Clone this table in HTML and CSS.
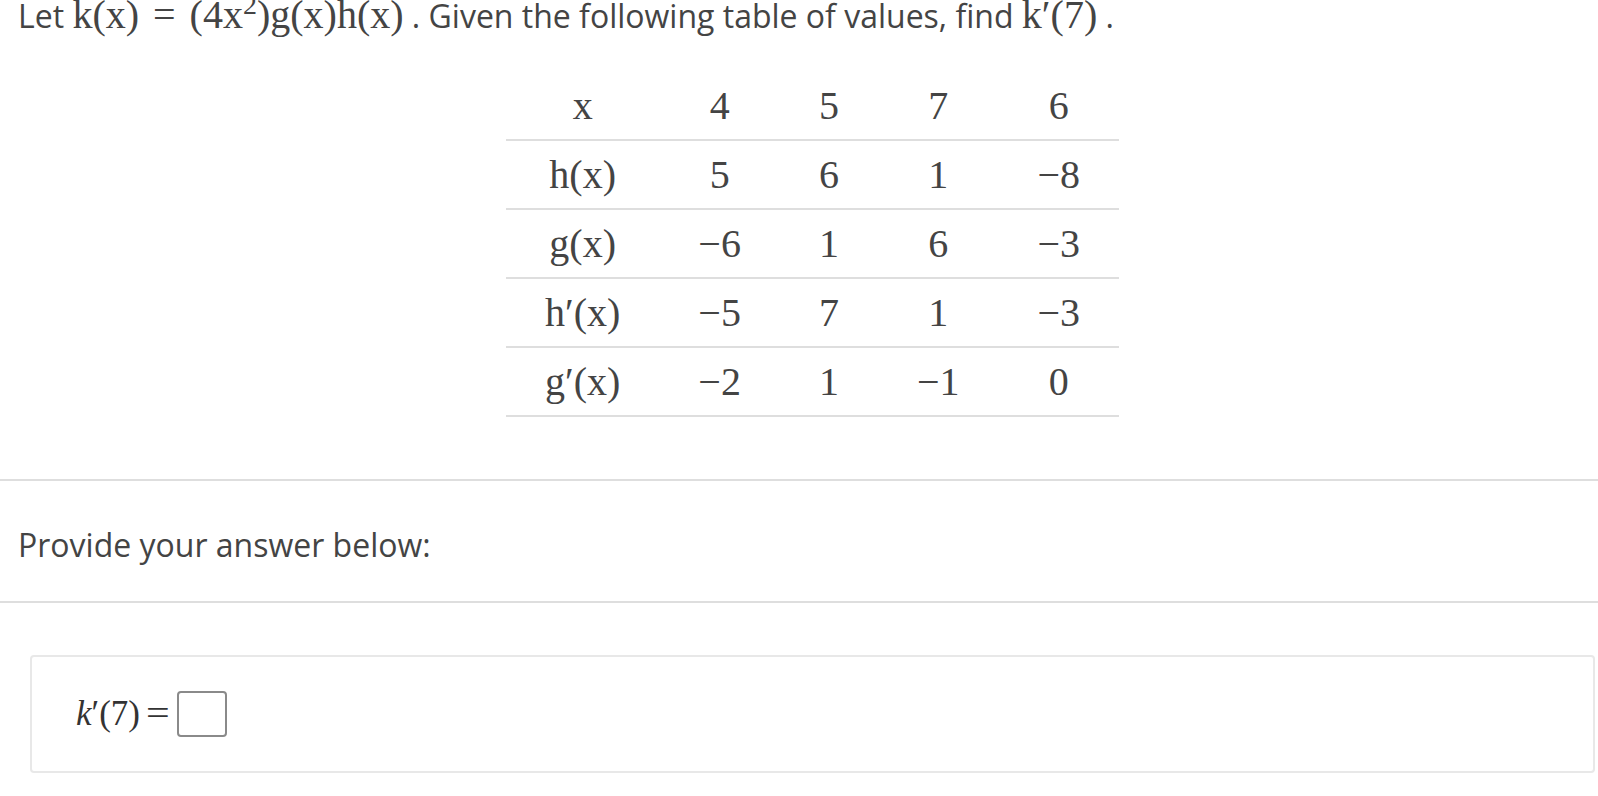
FILE: index.html
```html
<!DOCTYPE html>
<html lang="en">
<head>
<meta charset="utf-8">
<title>Question</title>
<link rel="stylesheet" href="styles.css">
</head>
<body>
<div class="page">
  <section class="question">
    <p class="prompt">Let <span class="m">k(x)<span class="rel">=</span>(4x<sup>2</sup>)g(x)h(x)</span> . Given the following table of values, find <span class="m">k′(7)</span> .</p>
    <table class="values">
      <tr><td>x</td><td>4</td><td>5</td><td>7</td><td>6</td></tr>
      <tr><td>h(x)</td><td>5</td><td>6</td><td>1</td><td>−8</td></tr>
      <tr><td>g(x)</td><td>−6</td><td>1</td><td>6</td><td>−3</td></tr>
      <tr><td>h′(x)</td><td>−5</td><td>7</td><td>1</td><td>−3</td></tr>
      <tr><td>g′(x)</td><td>−2</td><td>1</td><td>−1</td><td>0</td></tr>
    </table>
  </section>
  <section class="answer-label">
    <p>Provide your answer below:</p>
  </section>
  <section class="answer">
    <div class="answer-box">
      <span class="tex"><i>k</i>′(7)<span class="eq">=</span></span><span class="blank"></span>
    </div>
  </section>
</div>
</body>
</html>
```

FILE: styles.css
```css
html, body {
  margin: 0;
  padding: 0;
  background: #fff;
  overflow: hidden;
}

.page {
  width: 1625px;
  color: #444;
  font-family: "Open Sans", "Liberation Sans", sans-serif;
  font-size: 32px;
}

.question {
  padding: 0 18px;
  border-bottom: 2px solid #dedede;
}

.prompt {
  margin: 0;
  line-height: 30px;
  white-space: nowrap;
}

.m {
  font-family: "Liberation Serif", serif;
  font-size: 40px;
}

.m sup {
  font-size: 28px;
  line-height: 0;
  vertical-align: 14px;
}

.rel {
  margin: 0 14px;
}

.values {
  margin: 41px auto 62px;
  border-collapse: collapse;
  font-family: "Liberation Serif", serif;
  font-size: 40px;
  color: #444;
}

.values td {
  height: 67px;
  padding: 0 39px;
  text-align: center;
  border-bottom: 2px solid #dedede;
  white-space: nowrap;
}

.answer-label {
  padding: 49px 18px 41px;
  border-bottom: 2px solid #dedede;
}

.answer-label p {
  margin: 0;
  line-height: 30px;
}

.answer {
  padding: 52px 30px 0;
}

.answer-box {
  height: 114px;
  border: 2px solid #e8e8e8;
  border-radius: 4px;
  display: flex;
  align-items: center;
  padding-left: 44px;
}

.tex {
  font-family: "Liberation Serif", serif;
  font-size: 35px;
  color: #333;
}

.eq {
  display: inline-block;
  margin: 0 9px 0 8px;
  transform: scaleX(1.2);
}

.blank {
  width: 46px;
  height: 42px;
  border: 2px solid #8a8a8a;
  border-radius: 4px;
}
```
